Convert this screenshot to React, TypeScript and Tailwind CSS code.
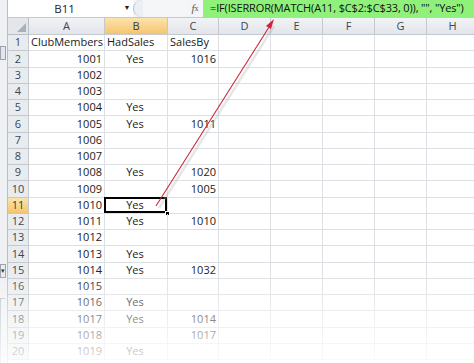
import React from "react";

const rows: [string, string, string][] = [
  ["ClubMembers", "HadSales", "SalesBy"],
  ["1001", "Yes", "1016"],
  ["1002", "", ""],
  ["1003", "", ""],
  ["1004", "Yes", ""],
  ["1005", "Yes", "1011"],
  ["1006", "", ""],
  ["1007", "", ""],
  ["1008", "Yes", "1020"],
  ["1009", "", "1005"],
  ["1010", "Yes", ""],
  ["1011", "Yes", "1010"],
  ["1012", "", ""],
  ["1013", "Yes", ""],
  ["1014", "Yes", "1032"],
  ["1015", "", ""],
  ["1016", "Yes", ""],
  ["1017", "Yes", "1014"],
  ["1018", "", "1017"],
  ["1019", "Yes", ""],
];

const cols = ["A", "B", "C", "D", "E", "F", "G", "H"];

export default function App() {
  return (
    <div
      className="relative w-[474px] h-[363px] overflow-hidden bg-white flex"
      style={{ fontFamily: '"Open Sans", "Noto Sans", sans-serif' }}
    >
      {/* left strip (window behind) */}
      <div className="w-[8px] shrink-0 bg-[#eef0f3] border-r border-[#b9bec6] flex flex-col">
        <div className="h-[46px]" />
        <div className="h-[14px] mr-[1px] border border-[#9aa3ae] bg-[#e2e6eb]" />
        <div className="h-[204px]" />
        <div className="h-[14px] mr-[1px] border border-[#9aa3ae] bg-[#e9ecf0] text-[7px] leading-[12px] text-[#333]">▾</div>
        <div className="h-[20px]" />
        <div className="flex-1 mr-[2px] border-l border-t border-[#b9bec6]" />
      </div>

      <div className="flex-1 flex flex-col min-w-0">
        {/* Formula bar */}
        <div className="h-[18px] flex items-stretch border-b border-[#c3c8cf] bg-[#f3f5f8]">
          <div className="w-[113px] bg-white flex items-center justify-center text-[11.5px] text-[#222]">
            B11
          </div>
          <div className="w-[12px] bg-white flex items-center justify-center text-[7px] text-[#222]">▼</div>
          <div className="w-[10px] bg-[#eceff3] rounded-l-full border-l border-[#bfc5cc]" />
          <div className="w-[44px] bg-[#f4f6f8]" />
          <div className="w-[16px] flex items-center justify-center text-[11px] italic text-[#555]" style={{ fontFamily: '"Liberation Serif", serif' }}>
            f<span className="text-[8px] not-italic">x</span>
          </div>
          <div
            className="flex-1 bg-[#8ff07a] flex items-center pl-[7px] text-[11px] text-[#111] whitespace-nowrap tracking-[-0.15px] overflow-hidden"
            style={{ fontFamily: '"Open Sans", sans-serif' }}
          >
            =IF(ISERROR(MATCH(A11, $C$2:$C$33, 0)), "", "Yes")
          </div>
        </div>

        {/* Grid */}
        <div className="grid grid-cols-[21px_76px_63px_51px_52px_52px_52px_52px_52px_52px]">
          {/* header row */}
          <div className="h-[17px] bg-[#e3e6ea] border-r border-b border-[#b8bec6] flex items-end justify-end">
            <div className="w-0 h-0 border-l-[9px] border-l-transparent border-b-[9px] border-b-[#a9b0b8] mr-[2px] mb-[2px]" />
          </div>
          {cols.map((c) => (
            <div
              key={c}
              className={
                "h-[17px] border-r border-b border-[#c4c9cf] flex items-center justify-center text-[11px] " +
                (c === "B"
                  ? "bg-gradient-to-b from-[#fbe3ad] to-[#f6c56c] text-[#3a3a3a]"
                  : "bg-gradient-to-b from-[#f1f3f6] to-[#e2e5ea] text-[#3b4654]")
              }
            >
              {c}
            </div>
          ))}
          <div className="h-[17px] bg-gradient-to-b from-[#f1f3f6] to-[#e2e5ea] border-b border-[#c4c9cf]" />

          {rows.map((r, i) => {
            const n = i + 1;
            const sel = n === 11;
            return (
              <React.Fragment key={n}>
                <div
                  className={
                    "h-[16.25px] border-r border-b border-[#c4c9cf] flex items-center justify-center text-[11px] " +
                    (sel
                      ? "bg-gradient-to-b from-[#fbe3ad] to-[#f6c56c] text-[#3a3a3a]"
                      : "bg-[#e9ecef] text-[#3b4654]")
                  }
                >
                  {n}
                </div>
                <div
                  className={
                    "h-[16.25px] border-r border-b border-[#dcdfe3] flex items-center text-[11px] text-[#1a1a1a] overflow-visible whitespace-nowrap " +
                    (n === 1 ? "justify-start pl-[2px]" : "justify-end pr-[2px]")
                  }
                >
                  {r[0]}
                </div>
                <div
                  className={
                    "relative h-[16.25px] border-r border-b border-[#dcdfe3] flex items-center text-[11px] text-[#1a1a1a] whitespace-nowrap " +
                    (n === 1 ? "justify-start pl-[2px]" : "justify-center pr-[2px]")
                  }
                >
                  {r[1]}
                  {sel && (
                    <>
                      <div className="absolute -left-[1px] -top-[1px] -right-[0px] -bottom-[0px] border-2 border-black" />
                      <div className="absolute -right-[3px] -bottom-[3px] w-[5px] h-[5px] bg-black border border-white" />
                    </>
                  )}
                </div>
                <div
                  className={
                    "h-[16.25px] border-r border-b border-[#dcdfe3] flex items-center text-[11px] text-[#1a1a1a] whitespace-nowrap " +
                    (n === 1 ? "justify-start pl-[2px]" : "justify-end pr-[2px]")
                  }
                >
                  {r[2]}
                </div>
                {["D", "E", "F", "G", "H", "I"].map((c) => (
                  <div key={c} className="h-[16.25px] border-r border-b border-[#dcdfe3]" />
                ))}
              </React.Fragment>
            );
          })}
        </div>
      </div>

      {/* Red arrow overlay */}
      <svg className="absolute left-0 top-0 pointer-events-none" width="474" height="363" viewBox="0 0 474 363">
        <line x1="157" y1="207" x2="272" y2="25" stroke="#aab0b6" strokeOpacity="0.3" strokeWidth="2.5" transform="translate(2,1)" />
        <line x1="156" y1="206" x2="271" y2="24" stroke="#c8283c" strokeWidth="1.1" />
        <polygon points="274,19 266,26 271,29" fill="#c8283c" />
      </svg>

      {/* Fade at bottom */}
      <div className="absolute left-0 right-0 top-[268px] bottom-0 bg-gradient-to-b from-white/0 via-white/45 to-white/85 pointer-events-none" />
    </div>
  );
}
